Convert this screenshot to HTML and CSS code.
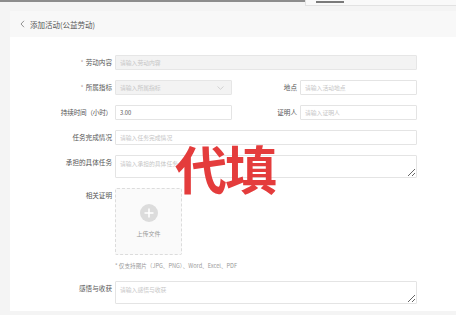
FILE: index.html
```html
<!DOCTYPE html>
<html lang="zh-CN">
<head>
    <meta charset="UTF-8">
    <title>添加活动(公益劳动)</title>
    <link rel="stylesheet" href="styles.css">
</head>
<body>
    <div class="top-tip"><span class="tip-mark"></span></div>
    <div class="page">
        <div class="panel">
            <div class="panel-head">
                <svg class="back" width="5" height="8" viewBox="0 0 5 8"><path d="M4 0.8 L1 4 L4 7.2" fill="none" stroke="#777" stroke-width="0.8"/></svg>
                <span class="head-title">添加活动(公益劳动)</span>
            </div>
            <form class="form">
                <label class="label"><i>*</i>劳动内容</label>
                <div class="field span3"><input class="input disabled" placeholder="请输入劳动内容" disabled></div>

                <label class="label"><i>*</i>所属指标</label>
                <div class="field">
                    <div class="input disabled select">
                        <span class="ph">请输入所属指标</span>
                        <svg width="7" height="4" viewBox="0 0 7 4"><path d="M0.5 0.5 L3.5 3.3 L6.5 0.5" fill="none" stroke="#c6c6c6" stroke-width="0.7"/></svg>
                    </div>
                </div>
                <label class="label">地点</label>
                <div class="field"><input class="input" placeholder="请输入活动地点"></div>

                <label class="label narrow">持续时间（小时）</label>
                <div class="field"><input class="input" value="3.00"></div>
                <label class="label">证明人</label>
                <div class="field"><input class="input" placeholder="请输入证明人"></div>

                <label class="label">任务完成情况</label>
                <div class="field span3"><input class="input" placeholder="请输入任务完成情况"></div>

                <label class="label top">承担的具体任务</label>
                <div class="field span3"><textarea class="input area" placeholder="请输入承担的具体任务"></textarea></div>

                <label class="label top">相关证明</label>
                <div class="field span3 upload-wrap">
                    <div class="upload">
                        <div class="plus">
                            <svg width="18" height="18" viewBox="0 0 18 18">
                                <circle cx="9" cy="9" r="9" fill="#dcdcdc"/>
                                <path d="M9 4.5 V13.5 M4.5 9 H13.5" stroke="#fff" stroke-width="1.6"/>
                            </svg>
                        </div>
                        <div class="upload-text">上传文件</div>
                    </div>
                    <div class="hint">* 仅支持图片（JPG、PNG）、Word、Excel、PDF</div>
                </div>

                <label class="label top">感悟与收获</label>
                <div class="field span3"><textarea class="input area" placeholder="请输入感悟与收获"></textarea></div>
            </form>
            <div class="stamp">代填</div>
        </div>
    </div>
</body>
</html>
```

FILE: styles.css
```css
body {
    margin: 0;
    background: #f4f4f4;
    border-top: 2px solid #8c8c8c;
    font-family: "Noto Sans CJK SC", "Noto Sans", sans-serif;
    color: #666;
    overflow: hidden;
}
.top-tip {
    position: absolute;
    top: -6px;
    left: 305px;
    width: 160px;
    height: 10px;
    border: 1px solid #e2e2e2;
    background: #f9f9f9;
}
.tip-mark {
    position: absolute;
    left: 10px;
    top: 6px;
    width: 28px;
    height: 2px;
    background: #7a7a7a;
}
.page {
    padding: 9px 0 0 10px;
}
.panel {
    position: relative;
    background: #fff;
    height: 300px;
}
.panel-head {
    height: 26px;
    background: #f8f8f8;
    display: flex;
    align-items: center;
    padding-left: 10px;
    font-size: 7.5px;
    color: #555;
}
.back {
    margin-right: 5px;
}
.form {
    display: grid;
    grid-template-columns: 102px 117px 62px 117px;
    column-gap: 3px;
    row-gap: 10px;
    padding-top: 18px;
}
.label {
    font-size: 6.6px;
    color: #555;
    text-align: right;
    line-height: 15px;
    white-space: nowrap;
}
.label i {
    font-style: normal;
    color: #b9a2a2;
    margin-right: 2px;
}
.narrow {
    letter-spacing: -0.2px;
}
.field {
    display: flex;
    flex-direction: column;
}
.span3 {
    grid-column: span 3;
}
.input {
    box-sizing: border-box;
    width: 100%;
    height: 15px;
    border: 1px solid #e4e4e4;
    border-radius: 1px;
    background: #fff;
    font-family: inherit;
    font-size: 5.8px;
    color: #555;
    padding: 0 4px;
    margin: 0;
    outline: none;
}
.input::placeholder {
    color: #c6c6c6;
}
.disabled {
    background: #f3f3f3;
    border-color: #e6e6e6;
}
.select {
    display: flex;
    align-items: center;
    justify-content: space-between;
    padding-right: 7px;
}
.ph {
    color: #c6c6c6;
}
.area {
    height: 23px;
    padding-top: 3px;
    resize: vertical;
}
.upload {
    box-sizing: border-box;
    width: 67px;
    height: 67px;
    border: 1px dashed #dcdcdc;
    border-radius: 2px;
    background: #fafafa;
    display: flex;
    flex-direction: column;
    align-items: center;
    padding-top: 14px;
}
.plus {
    height: 18px;
}
.upload-text {
    font-size: 6px;
    color: #999;
    margin-top: 8px;
}
.hint {
    font-size: 5.6px;
    color: #999;
    line-height: 10px;
    margin-top: 6px;
}
.stamp {
    position: absolute;
    left: 165px;
    top: 131px;
    font-size: 52px;
    font-weight: bold;
    color: #e43c3c;
    line-height: 1;
    letter-spacing: -2px;
}
```
